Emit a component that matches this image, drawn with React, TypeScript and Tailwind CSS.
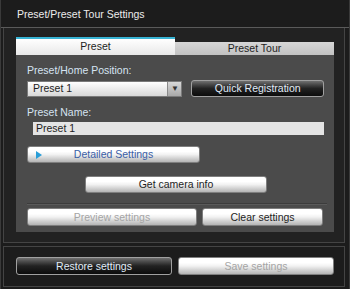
import React from "react";

const font = { fontFamily: '"Liberation Sans", Arial, sans-serif' };

function LightBtn({ children, className = "", disabled = false }: { children: React.ReactNode; className?: string; disabled?: boolean }) {
  return (
    <div
      className={
        "flex items-center justify-center rounded-[3px] border border-[#7e7e7e] bg-linear-to-b from-[#ffffff] from-30% via-[#f2f2f2] to-[#b4b4b4] text-[10.5px] leading-none " +
        (disabled ? "text-[#a4a4a4] " : "text-[#1e1e1e] ") +
        className
      }
    >
      {children}
    </div>
  );
}

function DarkBtn({ children, className = "" }: { children: React.ReactNode; className?: string }) {
  return (
    <div
      className={
        "flex items-center justify-center rounded-[3px] border border-[#a0a0a0] bg-linear-to-b from-[#707070] via-[#222222] to-[#0c0c0c] text-[10.5px] leading-none text-[#e0ecf8] " +
        className
      }
    >
      {children}
    </div>
  );
}

export default function App() {
  return (
    <div className="w-[350px] h-[289px] bg-[#1c1c1c] border-x border-[#3a3a3a] overflow-hidden" style={font}>
      <div className="h-[27px] flex items-center pl-[16px] pt-[2px] text-[10.5px] text-[#ececec]">
        Preset/Preset Tour Settings
      </div>
      <div className="h-px bg-[#5a5a5a]" />
      <div className="ml-[2px] w-[342px] h-[215px] border-x border-b border-[#444444] bg-[#222222] pt-[9px] pl-[12px]">
        <div className="flex items-end h-[18px] w-[318px]">
          <div className="w-[159px] h-[18px] border-t-[2px] border-[#38b4d4] bg-linear-to-b from-[#ffffff] to-[#e8e8e8] flex items-center justify-center text-[10.5px] text-[#1e1e1e]">
            Preset
          </div>
          <div className="flex-1 h-[13px] bg-linear-to-b from-[#d6d6d6] to-[#c2c2c2] flex items-center justify-center text-[10.5px] text-[#1e1e1e]">
            Preset Tour
          </div>
        </div>
        <div className="w-[318px] h-[177px] bg-[#4b4b4b] pl-[11px] pr-[10px] flex flex-col">
          <div className="mt-[9px] h-[13px] flex items-center text-[10.5px] text-[#d6e4f2]">Preset/Home Position:</div>
          <div className="mt-[3px] flex items-center h-[17px]">
            <div className="w-[156px] h-[16px] flex border border-[#7a7a7a] bg-linear-to-b from-[#ffffff] to-[#d8d8d8]">
              <div className="flex-1 flex items-center pl-[5px] text-[10.5px] text-[#1e1e1e]">Preset 1</div>
              <div className="w-[14px] border-l border-[#8a8a8a] bg-linear-to-b from-[#d8d8d8] to-[#a8a8a8] flex items-center justify-center text-[8px] text-[#333]">
                ▼
              </div>
            </div>
            <DarkBtn className="ml-[9px] w-[133px] h-[17px]">Quick Registration</DarkBtn>
          </div>
          <div className="mt-[9px] h-[13px] flex items-center text-[10.5px] text-[#d6e4f2]">Preset Name:</div>
          <div className="mt-[3px] ml-[6px] w-[291px] h-[13px] bg-[#e4e4e4] flex items-center pl-[3px] text-[10.5px] text-[#1e1e1e]">
            Preset 1
          </div>
          <LightBtn className="mt-[11px] w-[173px] h-[17px] relative">
            <span className="absolute left-[8px] top-[4px] w-0 h-0 border-y-[4px] border-y-transparent border-l-[6px] border-l-[#2a9ed8]" />
            <span className="text-[#3a5ea6]">Detailed Settings</span>
          </LightBtn>
          <LightBtn className="mt-[13px] ml-[58px] w-[182px] h-[17px]">Get camera info</LightBtn>
          <div className="mt-[10px] w-[300px] h-[2px] border-t border-[#3c3c3c] border-b border-b-[#5a5a5a]" />
          <div className="mt-[3px] flex h-[18px]">
            <LightBtn disabled className="w-[170px] h-[18px]">Preview settings</LightBtn>
            <LightBtn className="ml-[5px] w-[121px] h-[18px]">Clear settings</LightBtn>
          </div>
        </div>
      </div>
      <div className="mt-[3px] ml-[2px] w-[342px] h-[41px] border border-[#444444] pt-[10px] pl-[12px] flex">
        <DarkBtn className="w-[156px] h-[18px]">Restore settings</DarkBtn>
        <LightBtn disabled className="ml-[6px] w-[156px] h-[18px]">Save settings</LightBtn>
      </div>
    </div>
  );
}
